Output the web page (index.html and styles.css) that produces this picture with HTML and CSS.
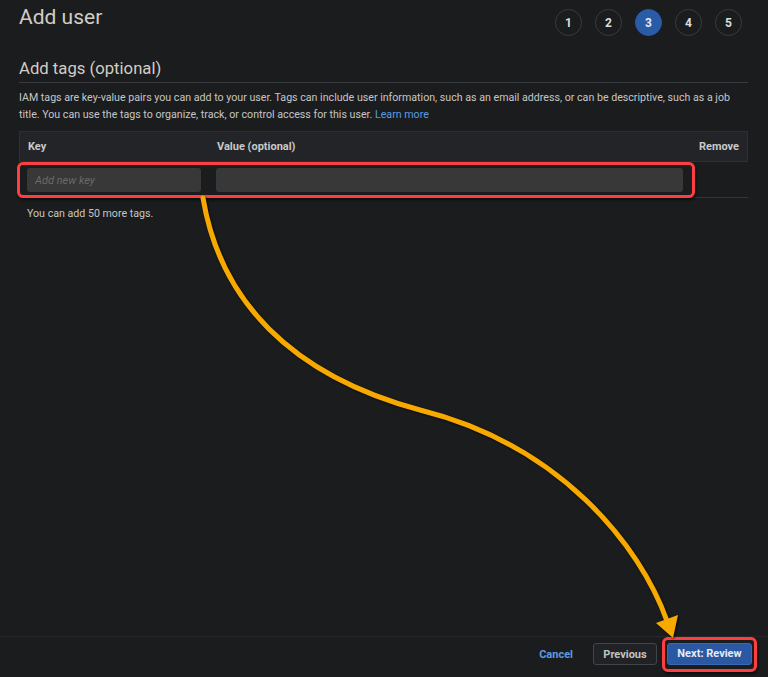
FILE: index.html
```html
<!DOCTYPE html>
<html lang="en">
<head>
<meta charset="utf-8">
<title>Add user</title>
<link rel="stylesheet" href="styles.css">
</head>
<body>
<div class="app">
  <main class="page">
    <header class="top">
      <h1 class="title">Add user</h1>
      <ol class="steps">
        <li class="step">1</li>
        <li class="step">2</li>
        <li class="step active">3</li>
        <li class="step">4</li>
        <li class="step">5</li>
      </ol>
    </header>
    <h2 class="section">Add tags (optional)</h2>
    <p class="desc">IAM tags are key-value pairs you can add to your user. Tags can include user information, such as an email address, or can be descriptive, such as a job title. You can use the tags to organize, track, or control access for this user. <a class="link" href="#">Learn more</a></p>
    <div class="table">
      <div class="thead">
        <span class="th">Key</span>
        <span class="th">Value (optional)</span>
        <span class="th th-right">Remove</span>
      </div>
      <div class="trow">
        <input class="field" type="text" placeholder="Add new key">
        <input class="field" type="text">
        <span></span>
      </div>
      <div class="mark-row"></div>
    </div>
    <p class="note">You can add 50 more tags.</p>
  </main>
  <footer class="footer">
    <a class="cancel" href="#">Cancel</a>
    <button class="btn btn-secondary" type="button">Previous</button>
    <span class="mark-btn"><button class="btn btn-primary" type="button">Next: Review</button></span>
  </footer>
  <svg class="arrow" width="768" height="677" viewBox="0 0 768 677" aria-hidden="true">
    <path d="M203,198 C220,300 290,375 420,410 C560,445 640,545 667,621" fill="none" stroke="#f7a900" stroke-width="5" stroke-linecap="round"/>
    <polygon points="656,623 678,615 673,638" fill="#f7a900"/>
  </svg>
</div>
</body>
</html>
```

FILE: styles.css
```css
* { box-sizing: border-box; }

html, body {
  margin: 0;
  padding: 0;
  background: #1b1c1e;
}

body {
  font-family: Roboto, "Liberation Sans", Arial, sans-serif;
  color: #c4c4c4;
}

.app {
  position: relative;
  width: 768px;
  height: 677px;
  display: flex;
  flex-direction: column;
  overflow: hidden;
}

.page {
  flex: 1;
  padding: 4px 20px 0 19px;
}

.top {
  display: flex;
  justify-content: space-between;
  align-items: flex-start;
  height: 36px;
}

.title {
  margin: 0;
  font-size: 21px;
  line-height: 26px;
  font-weight: 400;
  color: #d2cdc4;
}

.steps {
  list-style: none;
  margin: 5px 6px 0 0;
  padding: 0;
  display: flex;
  gap: 13px;
}

.step {
  width: 27px;
  height: 27px;
  border-radius: 50%;
  border: 1px solid #3a3b3e;
  display: flex;
  align-items: center;
  justify-content: center;
  font-size: 12px;
  font-weight: 700;
  color: #dcdcdc;
}

.step.active {
  background: #2a5ba6;
  border-color: #2a5ba6;
  color: #e6e9f0;
}

.section {
  margin: 18px 0 0;
  padding-bottom: 2px;
  font-size: 16.7px;
  line-height: 22px;
  font-weight: 400;
  color: #d2cdc4;
  border-bottom: 1px solid #3a3b3e;
}

.desc {
  margin: 6px 0 0;
  font-size: 10.65px;
  line-height: 17px;
  color: #c6c6c6;
}

.link {
  color: #5a9de0;
  text-decoration: none;
}

.table {
  position: relative;
  margin-top: 8px;
}

.thead,
.trow {
  display: grid;
  grid-template-columns: 174px 1fr 42px;
  column-gap: 15px;
  padding: 0 8px;
}

.thead {
  height: 31px;
  align-items: center;
  background: #232427;
  border: 1px solid #2e2f32;
}

.th {
  font-size: 11px;
  font-weight: 700;
  color: #c9c9c9;
}

.th-right {
  text-align: right;
}

.trow {
  padding-top: 6px;
  padding-bottom: 5px;
  border-bottom: 1px solid #343538;
}

.field {
  height: 24px;
  width: 100%;
  border: none;
  border-radius: 3px;
  background: #383838;
  padding: 0 8px;
  font-family: Roboto, "Liberation Sans", Arial, sans-serif;
  font-size: 11px;
  color: #d0d0d0;
  outline: none;
}

.field::placeholder {
  color: #6a6a6a;
  font-style: italic;
}

.mark-row {
  position: absolute;
  left: -2px;
  top: 31px;
  width: 678px;
  height: 36px;
  border: 3px solid #ff3e42;
  border-radius: 6px;
  box-shadow: 1px 2px 3px rgba(0, 0, 0, 0.6);
  pointer-events: none;
}

.note {
  margin: 7px 0 0;
  padding-left: 8px;
  font-size: 10.65px;
  line-height: 17px;
  color: #c6c6c6;
}

.footer {
  height: 41px;
  border-top: 1px solid #26272a;
  display: flex;
  justify-content: flex-end;
  align-items: center;
  padding: 0 11px 6px 0;
}

.cancel {
  font-size: 11px;
  font-weight: 700;
  color: #5a9de0;
  text-decoration: none;
  margin-right: 20px;
}

.btn {
  height: 22px;
  border-radius: 3px;
  font-family: Roboto, "Liberation Sans", Arial, sans-serif;
  font-size: 11px;
  font-weight: 700;
  padding: 0;
  cursor: pointer;
}

.btn-secondary {
  width: 64px;
  background: #212225;
  border: 1px solid #434447;
  color: #c2c2c2;
  margin-right: 5px;
}

.btn-primary {
  display: block;
  width: 85px;
  background: #2a58a2;
  border: 1px solid #3a68b2;
  color: #e8eaf0;
}

.mark-btn {
  display: block;
  padding: 3px 2px 4px 2px;
  border: 3px solid #ff3e42;
  border-radius: 6px;
  box-shadow: 1px 2px 3px rgba(0, 0, 0, 0.6);
}

.arrow {
  position: absolute;
  left: 0;
  top: 0;
  pointer-events: none;
  filter: drop-shadow(1px 1px 1px rgba(0, 0, 0, 0.7));
}
```
